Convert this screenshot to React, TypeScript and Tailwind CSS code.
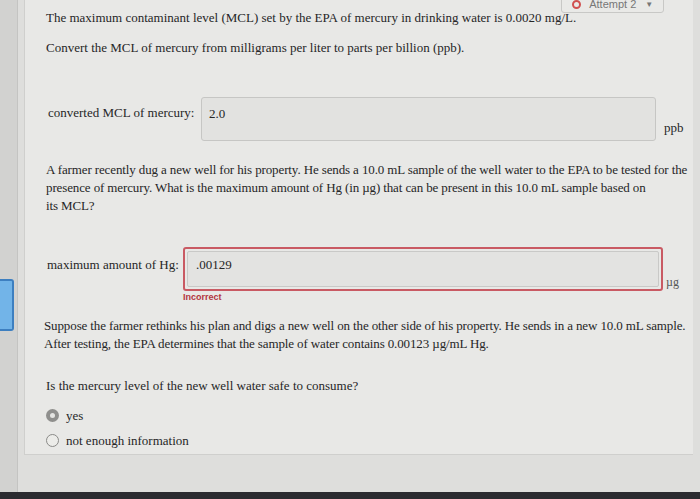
import React from 'react';

const serif = { fontFamily: '"Liberation Serif", "Times New Roman", serif' };

function Radio({ checked, label }: { checked?: boolean; label: string }) {
    return (
        <div className="flex items-center gap-[7px] h-[25px]">
            {checked ? (
                <span className="w-[13px] h-[13px] rounded-full bg-[#8f8f8d] flex items-center justify-center">
                    <span className="w-[5px] h-[5px] rounded-full bg-[#e4e4e2]" />
                </span>
            ) : (
                <span className="w-[13px] h-[13px] rounded-full border border-[#8a8a88] bg-[#ecece9]" />
            )}
            <span>{label}</span>
        </div>
    );
}

export default function App() {
    return (
        <div className="w-[700px] h-[499px] overflow-hidden flex flex-col bg-[#d6d6d4] text-[#262626] text-[13px]" style={serif}>
            <div className="flex flex-1 min-h-0">
                {/* left rail */}
                <div className="w-[18px] shrink-0 bg-[#d2d2d0] border-r border-[#c4c4c2] pt-[279px]">
                    <div className="w-[14px] h-[52px] bg-[#72b4e8] border-2 border-l-0 border-[#3d7fc0] rounded-r-[3px]" />
                </div>

                <div className="flex-1 bg-[#dededc] flex flex-col pl-[6px] pr-[8px]">
                    {/* attempt button strip */}
                    <div className="relative h-0">
                        <div className="absolute right-[29px] top-[-5px] w-[103px] h-[18px] rounded-[3px] border border-[#c8c8c6] bg-[#e9e9e7] flex items-center px-[10px] gap-[8px] text-[11px] leading-[11px] text-[#777]" style={{ fontFamily: '"Liberation Sans", Arial, sans-serif' }}>
                            <span className="w-[9px] h-[9px] rounded-full border-2 border-[#d05050]" />
                            <span>Attempt 2</span>
                            <span className="ml-auto text-[8px]">▼</span>
                        </div>
                    </div>

                    <div className="flex-1 bg-[#e8e8e6] border-l border-b border-[#cfcfcd] pl-[21px] pr-[6px] flex flex-col">
                        <p className="mt-[9px] leading-[18px]">The maximum contaminant level (MCL) set by the EPA of mercury in drinking water is 0.0020 mg/L.</p>
                        <p className="mt-[12px] leading-[18px]">Convert the MCL of mercury from milligrams per liter to parts per billion (ppb).</p>

                        <div className="mt-[40px] flex items-start">
                            <span className="mt-[6px] w-[155px] shrink-0 pl-[2px]">converted MCL of mercury:</span>
                            <div className="w-[455px] h-[44px] rounded-[3px] border border-[#c6c6c4] bg-[#e2e2e0] px-[7px] pt-[6px]">2.0</div>
                            <span className="self-end mb-[4px] ml-[8px]">ppb</span>
                        </div>

                        <p className="mt-[20px] leading-[18px] whitespace-nowrap tracking-[-0.12px]">
                            A farmer recently dug a new well for his property. He sends a 10.0 mL sample of the well water to the EPA to be tested for the<br />
                            presence of mercury. What is the maximum amount of Hg (in µg) that can be present in this 10.0 mL sample based on<br />
                            its MCL?
                        </p>

                        <div className="mt-[32px] flex items-start">
                            <span className="mt-[8px] w-[137px] shrink-0 pl-[1px]">maximum amount of Hg:</span>
                            <div className="flex flex-col">
                                <div className="w-[480px] h-[44px] rounded-[3px] border-2 border-[#c95a63] p-[2px]">
                                    <div className="h-full rounded-[2px] border border-[#c9c9c7] bg-[#e3e3e1] px-[8px] pt-[3px]">.00129</div>
                                </div>
                                <span className="mt-0 text-[9px] leading-[12px] font-bold text-[#b3353f]" style={{ fontFamily: '"Liberation Sans", Arial, sans-serif' }}>Incorrect</span>
                            </div>
                            <span className="mt-[26px] ml-[3px] text-[12px] text-[#555]">µg</span>
                        </div>

                        <p className="mt-[14px] leading-[18px] whitespace-nowrap tracking-[-0.12px] -ml-[2px]">
                            Suppose the farmer rethinks his plan and digs a new well on the other side of his property. He sends in a new 10.0 mL sample.<br />
                            After testing, the EPA determines that the sample of water contains 0.00123 µg/mL Hg.
                        </p>

                        <p className="mt-[24px] leading-[18px]">Is the mercury level of the new well water safe to consume?</p>

                        <div className="mt-[8px] flex flex-col">
                            <Radio checked label="yes" />
                            <Radio label="not enough information" />
                        </div>
                    </div>
                    <div className="h-[37px]" />
                </div>
            </div>
            <div className="h-[7px] bg-[#2b2b30]" />
        </div>
    );
}
